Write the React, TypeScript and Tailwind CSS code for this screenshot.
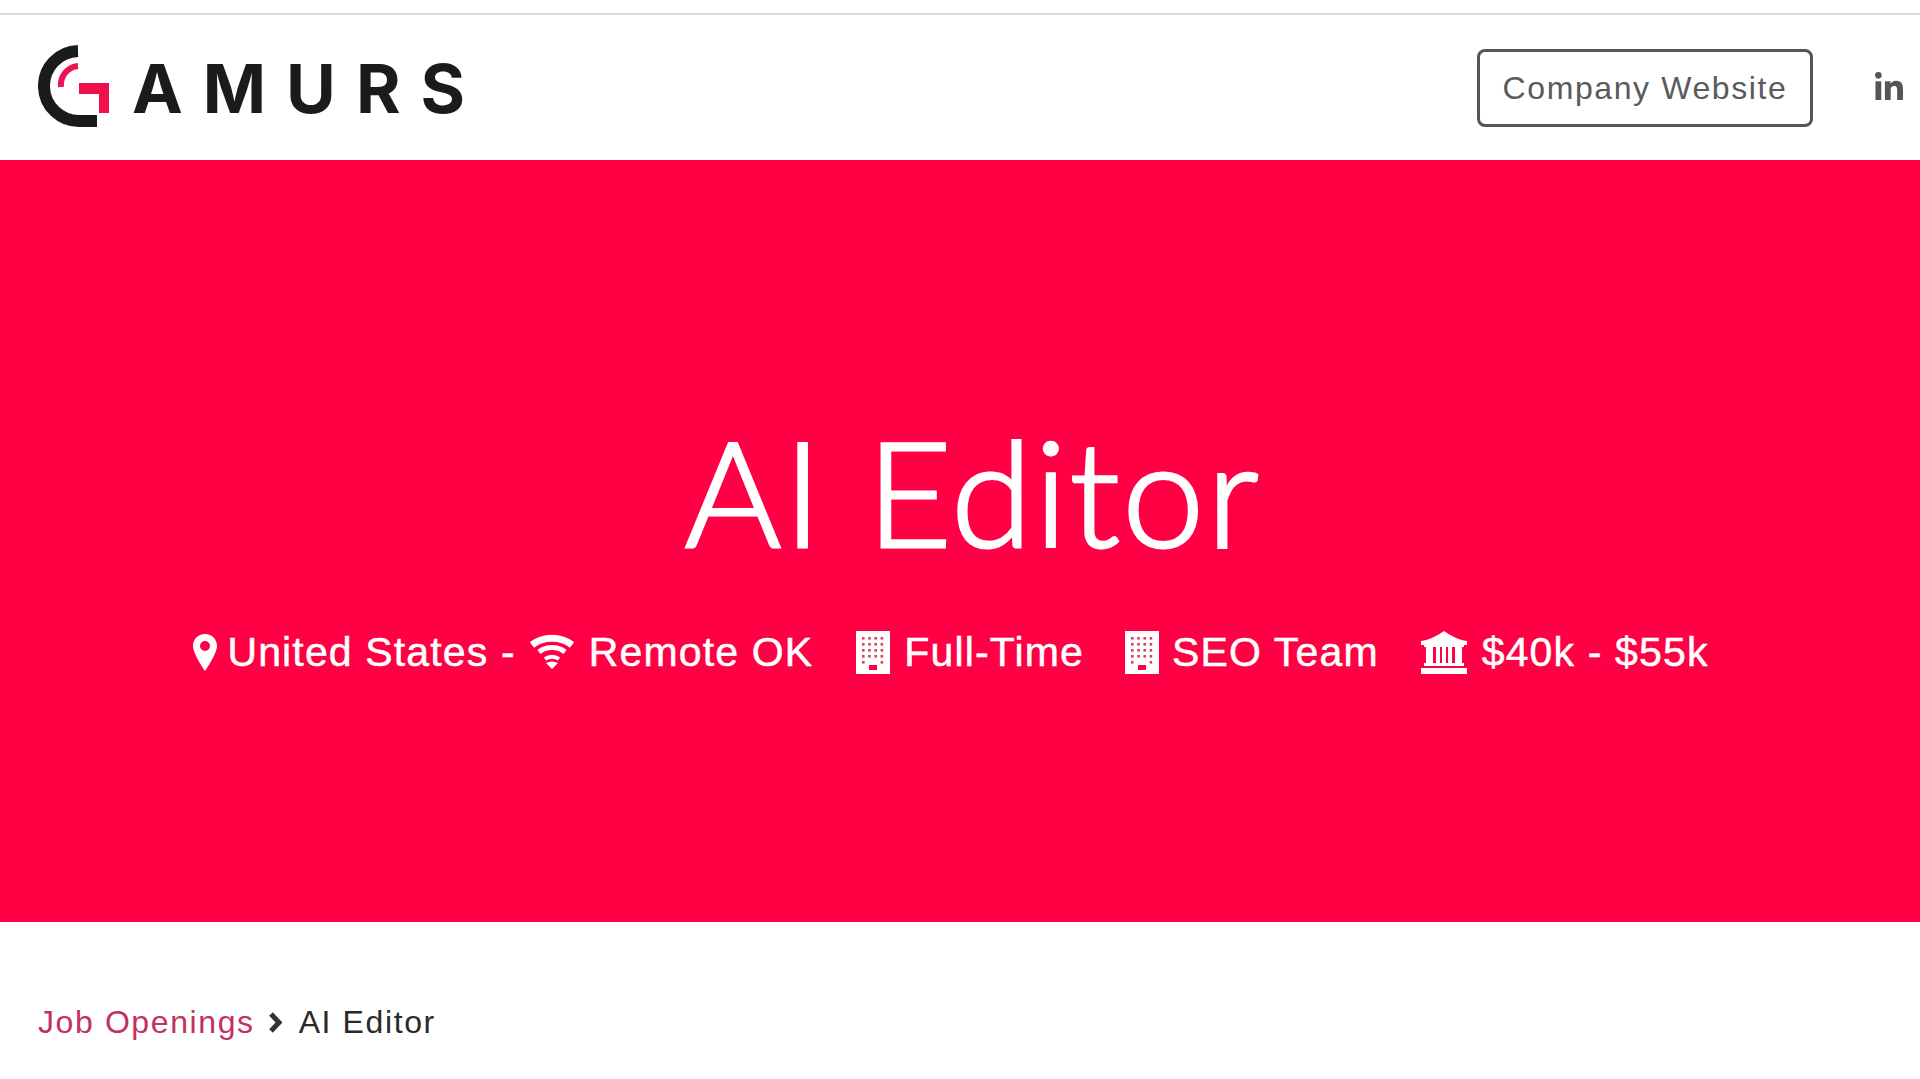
import React from "react";
import { FaLinkedinIn } from "react-icons/fa";

function Pin() {
  return (
    <svg width="24" height="37" viewBox="0 0 24 37" fill="#fff" className="shrink-0">
      <path
        fillRule="evenodd"
        d="M12 0 C5 0 0 5.5 0 12 C0 20 12 37 12 37 C12 37 24 20 24 12 C24 5.5 19 0 12 0 Z M12 7 A5 5 0 1 1 12 17 A5 5 0 1 1 12 7 Z"
      />
    </svg>
  );
}

function Building() {
  const dots: React.ReactElement[] = [];
  for (let r = 0; r < 5; r++) {
    for (let c = 0; c < 4; c++) {
      if (r === 4 && (c === 1 || c === 2)) continue;
      dots.push(<rect key={`${r}-${c}`} x={6 + c * 6.2} y={6 + r * 6} width="2.6" height="2.6" fill="#d8405f" />);
    }
  }
  return (
    <svg width="34" height="43" viewBox="0 0 34 43" className="shrink-0">
      <rect width="34" height="43" fill="#fff" />
      {dots}
      <rect x="13" y="34" width="8" height="5" fill="#ff0044" />
    </svg>
  );
}

function Bank() {
  return (
    <svg width="46" height="43" viewBox="0 0 46 43" fill="#fff" className="shrink-0">
      <path d="M23 0 C30 5 38 9 46 10 V14 H0 V10 C8 9 16 5 23 0 Z" />
      <rect x="3" y="14" width="40" height="2" />
      <rect x="5" y="16" width="7" height="16" />
      <rect x="15" y="16" width="4" height="16" />
      <rect x="21" y="16" width="4" height="16" />
      <rect x="27" y="16" width="4" height="16" />
      <rect x="34" y="16" width="7" height="16" />
      <rect x="3" y="32" width="40" height="3" />
      <rect x="0" y="37" width="46" height="6" />
    </svg>
  );
}

function Wifi() {
  return (
    <svg width="46" height="36" viewBox="0 0 46 36" fill="none" stroke="#fff" className="shrink-0">
      <path d="M3 11 C14 2 32 2 43 11" strokeWidth="7" />
      <path d="M10 18 C17 12 29 12 36 18" strokeWidth="5" />
      <path d="M16 25 C20 22 26 22 30 25" strokeWidth="4" />
      <path d="M23 35 L17 29 C21 27 25 27 29 29 Z" fill="#fff" stroke="none" />
    </svg>
  );
}

function Chevron() {
  return (
    <svg width="15" height="21" viewBox="0 0 15 21" fill="none" stroke="#333" strokeWidth="5" className="shrink-0">
      <path d="M3 2 L11 10.5 L3 19" />
    </svg>
  );
}

function Logo() {
  return (
    <svg width="72" height="84" viewBox="38 44 72 84" fill="none" className="mb-[3px] shrink-0">
      <path d="M78 51 A35 35 0 0 0 80 121 L97 121" stroke="#1b1b1b" strokeWidth="12" />
      <path d="M78 66 A19 19 0 0 0 61 87" stroke="#e8174f" strokeWidth="6" />
      <path d="M79 83 H109 V113 H99 V94 H79 Z" fill="#f0104c" />
    </svg>
  );
}

export default function App() {
  return (
    <div className="h-[1079px] overflow-hidden bg-white font-['Liberation_Sans',Arial,sans-serif]">
      <div className="h-[15px] border-b-2 border-[#d9d9d9]" />
      <header className="flex h-[145px] items-center justify-between pl-[38px] pr-[15px]">
        <div className="flex items-center">
          <Logo />
          <span className="ml-[22px] mt-[1px] font-['Inter',sans-serif] text-[68px] font-bold leading-none tracking-[20px] text-[#1b1b1b]">
            AMURS
          </span>
        </div>
        <div className="flex items-center gap-[60px]">
          <a className="flex h-[78px] w-[336px] items-center justify-center rounded-[8px] border-[3px] border-[#555] text-[32px] tracking-[1.6px] text-[#5a5a5a]">
            Company Website
          </a>
          <FaLinkedinIn className="text-[32px] text-[#555]" />
        </div>
      </header>
      <section className="flex h-[762px] flex-col items-center bg-[#ff0044] pt-[255px] text-white">
        <h1 className="pl-[26px] font-['Lato',sans-serif] text-[147px] font-light leading-[150px] tracking-[2.5px] [-webkit-text-stroke:3px_white]">
          AI Editor
        </h1>
        <div className="mt-[63px] flex items-center pr-[18px] text-[41px] leading-[48px] tracking-[1.15px] [-webkit-text-stroke:0.5px_white]">
          <span className="mr-[10px]"><Pin /></span>
          <span>United States -</span>
          <span className="ml-[13px] mr-[14px]"><Wifi /></span>
          <span>Remote OK</span>
          <span className="ml-[43px] mr-[14px]"><Building /></span>
          <span>Full-Time</span>
          <span className="ml-[41px] mr-[13px]"><Building /></span>
          <span>SEO Team</span>
          <span className="ml-[42px] mr-[15px]"><Bank /></span>
          <span>$40k - $55k</span>
        </div>
      </section>
      <nav className="flex items-center pl-[38px] pt-[80px] text-[32px] leading-[40px] tracking-[1.6px] text-[#2a2a2a]">
        <a className="text-[#c4315f]">Job Openings</a>
        <span className="ml-[13px] mr-[16px]"><Chevron /></span>
        <span>AI Editor</span>
      </nav>
    </div>
  );
}
